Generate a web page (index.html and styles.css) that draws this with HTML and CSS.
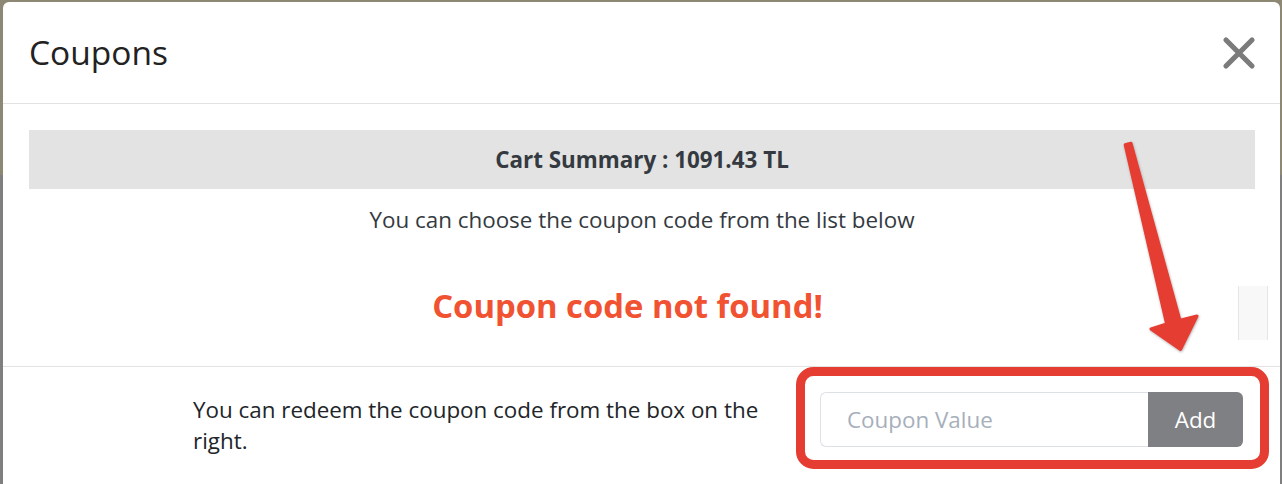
FILE: index.html
```html
<!DOCTYPE html>
<html lang="en">
<head>
<meta charset="utf-8">
<title>Coupons</title>
<link rel="stylesheet" href="styles.css">
</head>
<body>
<div class="modal">
  <div class="modal-header">
    <h5 class="modal-title">Coupons</h5>
    <button class="close" type="button" aria-label="Close">
      <svg width="34" height="34" viewBox="0 0 34 34"><path d="M4 4 L30 30 M30 4 L4 30" stroke="#7b7b7b" stroke-width="5.2" stroke-linecap="round"/></svg>
    </button>
  </div>
  <div class="modal-body">
    <div class="summary">Cart Summary : 1091.43 TL</div>
    <p class="hint">You can choose the coupon code from the list below</p>
    <div class="list-row">
      <div class="not-found">Coupon code not found!</div>
      <div class="scroll-stub"></div>
    </div>
  </div>
  <div class="modal-footer">
    <p class="redeem">You can redeem the coupon code from the box on the right.</p>
    <div class="input-group">
      <input class="form-control" type="text" placeholder="Coupon Value">
      <button class="btn-add" type="button">Add</button>
    </div>
  </div>
</div>
<svg class="annotation" width="1282" height="484" viewBox="0 0 1282 484">
  <defs>
    <filter id="sh" x="-20%" y="-20%" width="140%" height="140%">
      <feDropShadow dx="0.5" dy="1" stdDeviation="0.8" flood-color="#555" flood-opacity="0.5"/>
    </filter>
  </defs>
  <path filter="url(#sh)" d="M1125.2,144.8 L1166.6,323.8 L1151,329 L1180.5,349.5 L1197,316 L1180,320.3 L1131,143.2 Z" fill="#e53d32" stroke="#e53d32" stroke-width="3" stroke-linejoin="round"/>
  <rect x="800.5" y="371.5" width="464" height="93" rx="13" ry="13" fill="none" stroke="#e53d32" stroke-width="9"/>
</svg>
</body>
</html>
```
FILE: styles.css
```css
* { box-sizing: border-box; }
html, body { margin: 0; padding: 0; }
body {
  width: 1282px;
  height: 484px;
  overflow: hidden;
  background: linear-gradient(to bottom, #8d8873 0, #8d8873 175px, #7f7f7f 175px);
  font-family: "Open Sans", "Noto Sans", sans-serif;
  color: #212529;
  position: relative;
}
.modal {
  margin: 2px 0 0 3px;
  width: 1277px;
  height: 500px;
  background: #fff;
  border-radius: 6px;
}
.modal-header {
  display: flex;
  align-items: center;
  justify-content: space-between;
  height: 102px;
  padding: 0 24px 0 26px;
  border-bottom: 1px solid #e2e2e2;
}
.modal-title {
  margin: 0;
  font-size: 33.5px;
  font-weight: 400;
  line-height: 45px;
  color: #222;
}
.close {
  background: none;
  border: 0;
  padding: 0;
  width: 34px;
  height: 34px;
  display: flex;
  margin-top: 1px;
}
.modal-body {
  padding: 26px 25px 0 26px;
  height: 263px;
  border-bottom: 1px solid #e2e2e2;
}
.summary {
  background: #e3e3e3;
  text-align: center;
  font-weight: 700;
  font-size: 22.4px;
  line-height: 30px;
  padding: 14.5px 0;
  color: #343a40;
}
.hint {
  margin: 15px 0 0;
  text-align: center;
  font-size: 22.4px;
  line-height: 31px;
  color: #343a40;
}
.list-row {
  display: flex;
  align-items: flex-start;
  margin-top: 48px;
  margin-right: -13px;
}
.not-found {
  flex: 1;
  text-align: center;
  color: #f05232;
  font-weight: 700;
  font-size: 32.8px;
  line-height: 46px;
  margin-right: 12px;
}
.scroll-stub {
  margin-top: 3px;
  width: 30px;
  height: 54px;
  background: #f8f8f8;
  border-left: 1px solid #e6e6e6;
  border-right: 1px solid #e6e6e6;
}
.modal-footer {
  display: flex;
  align-items: flex-start;
  padding: 25px 37px 0 190px;
}
.redeem {
  margin: 2px 0 0;
  width: 595px;
  font-size: 22.4px;
  line-height: 31px;
  color: #212529;
}
.input-group {
  display: flex;
  margin-left: auto;
  width: 423px;
  height: 55px;
}
.form-control {
  flex: 1;
  min-width: 0;
  border: 1px solid #dde1e5;
  border-right: 0;
  border-radius: 6px 0 0 6px;
  padding: 0 26px;
  font-family: "Open Sans", "Noto Sans", sans-serif;
  font-size: 22.4px;
  color: #495057;
  outline: none;
}
.form-control::placeholder { color: #a6afbb; }
.btn-add {
  width: 95px;
  border: 0;
  border-radius: 0 6px 6px 0;
  background: #7e8083;
  color: #fff;
  font-family: "Open Sans", "Noto Sans", sans-serif;
  font-size: 22.4px;
}
.annotation {
  position: absolute;
  left: 0;
  top: 0;
  pointer-events: none;
}
```
